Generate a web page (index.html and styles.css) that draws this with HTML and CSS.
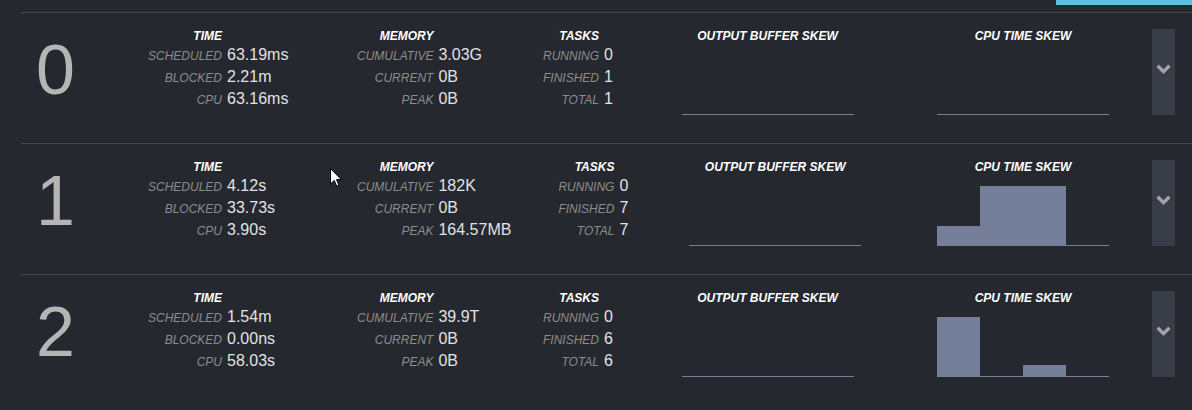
FILE: index.html
```html
<!DOCTYPE html>
<html lang="en">
<head>
<meta charset="utf-8">
<title>Stages</title>
<link rel="stylesheet" href="styles.css">
</head>
<body>
<div class="page">
  <div class="toolbar"><div class="tab-active"></div></div>
  <div class="stages">

    <section class="stage">
      <div class="stage-id">0</div>
      <div class="stat stat-time">
        <table class="stat-table">
          <thead><tr><th class="stat-title stat-header">Time</th><th></th></tr></thead>
          <tbody>
            <tr><td class="stat-title">Scheduled</td><td class="stat-text">63.19ms</td></tr>
            <tr><td class="stat-title">Blocked</td><td class="stat-text">2.21m</td></tr>
            <tr><td class="stat-title">CPU</td><td class="stat-text">63.16ms</td></tr>
          </tbody>
        </table>
      </div>
      <div class="stat stat-memory">
        <table class="stat-table">
          <thead><tr><th class="stat-title stat-header">Memory</th><th></th></tr></thead>
          <tbody>
            <tr><td class="stat-title">Cumulative</td><td class="stat-text">3.03G</td></tr>
            <tr><td class="stat-title">Current</td><td class="stat-text">0B</td></tr>
            <tr><td class="stat-title">Peak</td><td class="stat-text">0B</td></tr>
          </tbody>
        </table>
      </div>
      <div class="stat stat-tasks">
        <table class="stat-table">
          <thead><tr><th class="stat-title stat-header">Tasks</th><th></th></tr></thead>
          <tbody>
            <tr><td class="stat-title">Running</td><td class="stat-text">0</td></tr>
            <tr><td class="stat-title">Finished</td><td class="stat-text">1</td></tr>
            <tr><td class="stat-title">Total</td><td class="stat-text">1</td></tr>
          </tbody>
        </table>
      </div>
      <div class="chart chart-buffer">
        <div class="chart-title">Output Buffer Skew</div>
        <div class="histogram"><div class="bar" style="height:0px"></div><div class="bar" style="height:0px"></div><div class="bar" style="height:0px"></div><div class="bar" style="height:0px"></div></div>
      </div>
      <div class="chart chart-cpu">
        <div class="chart-title">CPU Time Skew</div>
        <div class="histogram"><div class="bar" style="height:0px"></div><div class="bar" style="height:0px"></div><div class="bar" style="height:0px"></div><div class="bar" style="height:0px"></div></div>
      </div>
      <a class="expand" title="More">
        <svg class="chevron" viewBox="0 0 15 10" width="15" height="10"><path d="M1.6 1.8 L7.5 7.6 L13.4 1.8" fill="none" stroke="#a3a3a3" stroke-width="3.4" stroke-linejoin="miter"/></svg>
      </a>
    </section>

    <section class="stage">
      <div class="stage-id">1</div>
      <div class="stat stat-time">
        <table class="stat-table">
          <thead><tr><th class="stat-title stat-header">Time</th><th></th></tr></thead>
          <tbody>
            <tr><td class="stat-title">Scheduled</td><td class="stat-text">4.12s</td></tr>
            <tr><td class="stat-title">Blocked</td><td class="stat-text">33.73s</td></tr>
            <tr><td class="stat-title">CPU</td><td class="stat-text">3.90s</td></tr>
          </tbody>
        </table>
      </div>
      <div class="stat stat-memory">
        <table class="stat-table">
          <thead><tr><th class="stat-title stat-header">Memory</th><th></th></tr></thead>
          <tbody>
            <tr><td class="stat-title">Cumulative</td><td class="stat-text">182K</td></tr>
            <tr><td class="stat-title">Current</td><td class="stat-text">0B</td></tr>
            <tr><td class="stat-title">Peak</td><td class="stat-text">164.57MB</td></tr>
          </tbody>
        </table>
      </div>
      <div class="stat stat-tasks">
        <table class="stat-table">
          <thead><tr><th class="stat-title stat-header">Tasks</th><th></th></tr></thead>
          <tbody>
            <tr><td class="stat-title">Running</td><td class="stat-text">0</td></tr>
            <tr><td class="stat-title">Finished</td><td class="stat-text">7</td></tr>
            <tr><td class="stat-title">Total</td><td class="stat-text">7</td></tr>
          </tbody>
        </table>
      </div>
      <div class="chart chart-buffer">
        <div class="chart-title">Output Buffer Skew</div>
        <div class="histogram"><div class="bar" style="height:0px"></div><div class="bar" style="height:0px"></div><div class="bar" style="height:0px"></div><div class="bar" style="height:0px"></div></div>
      </div>
      <div class="chart chart-cpu">
        <div class="chart-title">CPU Time Skew</div>
        <div class="histogram"><div class="bar" style="height:20px"></div><div class="bar" style="height:60px"></div><div class="bar" style="height:60px"></div><div class="bar" style="height:0px"></div></div>
      </div>
      <a class="expand" title="More">
        <svg class="chevron" viewBox="0 0 15 10" width="15" height="10"><path d="M1.6 1.8 L7.5 7.6 L13.4 1.8" fill="none" stroke="#a3a3a3" stroke-width="3.4" stroke-linejoin="miter"/></svg>
      </a>
    </section>

    <section class="stage">
      <div class="stage-id">2</div>
      <div class="stat stat-time">
        <table class="stat-table">
          <thead><tr><th class="stat-title stat-header">Time</th><th></th></tr></thead>
          <tbody>
            <tr><td class="stat-title">Scheduled</td><td class="stat-text">1.54m</td></tr>
            <tr><td class="stat-title">Blocked</td><td class="stat-text">0.00ns</td></tr>
            <tr><td class="stat-title">CPU</td><td class="stat-text">58.03s</td></tr>
          </tbody>
        </table>
      </div>
      <div class="stat stat-memory">
        <table class="stat-table">
          <thead><tr><th class="stat-title stat-header">Memory</th><th></th></tr></thead>
          <tbody>
            <tr><td class="stat-title">Cumulative</td><td class="stat-text">39.9T</td></tr>
            <tr><td class="stat-title">Current</td><td class="stat-text">0B</td></tr>
            <tr><td class="stat-title">Peak</td><td class="stat-text">0B</td></tr>
          </tbody>
        </table>
      </div>
      <div class="stat stat-tasks">
        <table class="stat-table">
          <thead><tr><th class="stat-title stat-header">Tasks</th><th></th></tr></thead>
          <tbody>
            <tr><td class="stat-title">Running</td><td class="stat-text">0</td></tr>
            <tr><td class="stat-title">Finished</td><td class="stat-text">6</td></tr>
            <tr><td class="stat-title">Total</td><td class="stat-text">6</td></tr>
          </tbody>
        </table>
      </div>
      <div class="chart chart-buffer">
        <div class="chart-title">Output Buffer Skew</div>
        <div class="histogram"><div class="bar" style="height:0px"></div><div class="bar" style="height:0px"></div><div class="bar" style="height:0px"></div><div class="bar" style="height:0px"></div></div>
      </div>
      <div class="chart chart-cpu">
        <div class="chart-title">CPU Time Skew</div>
        <div class="histogram"><div class="bar" style="height:60px"></div><div class="bar" style="height:0px"></div><div class="bar" style="height:12px"></div><div class="bar" style="height:0px"></div></div>
      </div>
      <a class="expand" title="More">
        <svg class="chevron" viewBox="0 0 15 10" width="15" height="10"><path d="M1.6 1.8 L7.5 7.6 L13.4 1.8" fill="none" stroke="#a3a3a3" stroke-width="3.4" stroke-linejoin="miter"/></svg>
      </a>
    </section>

  </div>
  <svg class="cursor" viewBox="0 0 12 19" width="12" height="19"><path d="M0.5 0.5 L0.5 16 L4.2 12.4 L6.8 18.3 L9 17.3 L6.5 11.6 L11.3 11.6 Z" fill="#fff" stroke="#000" stroke-width="1" stroke-linejoin="miter"/></svg>
</div>
</body>
</html>
```

FILE: styles.css
```css
* {
  box-sizing: border-box;
}

html,
body {
  margin: 0;
  padding: 0;
  background: #25282f;
}

body {
  font-family: "Liberation Sans", Arial, sans-serif;
  color: #e2e2e2;
  overflow: hidden;
}

.page {
  position: relative;
  width: 1192px;
  height: 410px;
}

.toolbar {
  display: flex;
  justify-content: flex-end;
  height: 5px;
  margin-bottom: 7px;
}

.tab-active {
  width: 136px;
  background: #5bc0de;
}

.stages {
  margin-left: 21px;
}

.stage {
  display: grid;
  grid-template-columns: 69px 267px minmax(186px, max-content) 100px 1fr 172px 66px;
  align-items: start;
  height: 131px;
  padding: 16px 17px 0 0;
  border-top: 1px solid #45474d;
}

.stage-id {
  margin-top: 6px;
  font-size: 70px;
  line-height: 70px;
  color: #b5b5b5;
  text-align: center;
}

.stat-time {
  padding-left: 58px;
}

.stat-memory {
  padding-right: 47px;
}

.stat-table {
  border-collapse: collapse;
  border-spacing: 0;
}

.stat-table th,
.stat-table td {
  padding: 0;
  vertical-align: baseline;
  white-space: nowrap;
}

.stat-title {
  padding-right: 5px !important;
  font-size: 12px;
  line-height: 18px;
  font-style: italic;
  font-weight: normal;
  text-transform: uppercase;
  text-align: right;
  color: #8c8c8c;
}

.stat-table th.stat-header {
  line-height: 15px;
  font-weight: bold;
  color: #fff;
}

.stat-text {
  font-size: 16px;
  line-height: 22px;
  text-align: left;
  color: #e2e2e2;
}

.chart {
  display: flex;
  flex-direction: column;
  align-items: center;
}

.chart-buffer {
  padding-right: 45px;
}

.chart-title {
  font-size: 12px;
  line-height: 15px;
  font-style: italic;
  font-weight: bold;
  text-transform: uppercase;
  color: #fff;
  white-space: nowrap;
}

.histogram {
  display: flex;
  align-items: flex-end;
  width: 172px;
  height: 60px;
  margin-top: 11px;
}

.bar {
  flex: 1 1 0;
  min-height: 1px;
  background: #767f99;
}

.expand {
  justify-self: end;
  display: flex;
  align-items: center;
  justify-content: center;
  width: 23px;
  height: 86px;
  background: #393d48;
  cursor: pointer;
}

.chevron {
  display: block;
  margin-bottom: 6px;
}

.cursor {
  position: absolute;
  left: 330px;
  top: 168px;
  display: block;
}
```
